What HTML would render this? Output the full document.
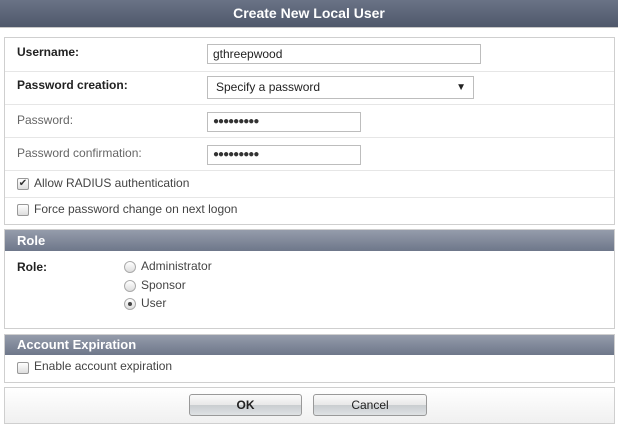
<html><head><style>
body{margin:0;width:618px;height:427px;background:#fff;font-family:"Liberation Sans",Arial,sans-serif;font-size:12px;color:#333;position:relative;overflow:hidden}
.a{position:absolute}
.title{left:0;top:0;width:618px;height:27px;background:linear-gradient(#6a7386,#4f586b);color:#fff;font-weight:bold;font-size:14px;text-align:center;line-height:27px;border-bottom:1px solid #c8c8c8}
.box{border:1px solid #cfcfcf;left:4px;width:609px}
.sep{left:5px;width:609px;height:1px;background:#e6e6e6}
.lbl{left:17px;font-weight:bold;color:#222}
.gl{left:17px;color:#666}
.inp{border:1px solid #bdbdbd;background:#fff;height:18px;line-height:18px;padding-left:5px;box-sizing:border-box}
.hdr{left:5px;width:609px;height:21px;background:linear-gradient(#959cab,#6e778a);color:#fff;font-weight:bold;font-size:13px;line-height:21px;padding-left:12px;box-sizing:border-box}
.cb{width:10px;height:10px;border:1px solid #999;border-radius:2px;background:linear-gradient(#fff,#ddd)}
.rd{width:10px;height:10px;border:1px solid #aaa;border-radius:50%;background:linear-gradient(#fff,#ddd)}
.btn{height:22px;border:1px solid #999;border-radius:3px;background:linear-gradient(#fafafa 0%,#e8e8e8 50%,#c9cdd0 51%,#dfe2e4 100%);text-align:center;line-height:20px;box-sizing:border-box;color:#222}
</style></head><body>
<div class="a title">Create New Local User</div>
<div class="a box" style="top:37px;height:186px"></div>
<div class="a sep" style="top:71px"></div>
<div class="a sep" style="top:104px"></div>
<div class="a sep" style="top:137px"></div>
<div class="a sep" style="top:170px"></div>
<div class="a sep" style="top:197px"></div>
<div class="a lbl" style="top:45px">Username:</div>
<div class="a inp" style="left:207px;top:44px;width:274px;height:20px;line-height:18px;color:#222">gthreepwood</div>
<div class="a lbl" style="top:78px">Password creation:</div>
<div class="a inp" style="left:207px;top:76px;width:267px;height:23px;line-height:21px;padding-left:8px;color:#222">Specify a password<span style="position:absolute;right:7px;font-size:10px">▼</span></div>
<div class="a gl" style="top:113px">Password:</div>
<div class="a inp" style="left:207px;top:112px;width:154px;height:20px;font-size:10px;letter-spacing:-1px">●●●●●●●●●</div>
<div class="a gl" style="top:146px">Password confirmation:</div>
<div class="a inp" style="left:207px;top:145px;width:154px;height:20px;font-size:10px;letter-spacing:-1px">●●●●●●●●●</div>
<div class="a cb" style="left:17px;top:178px;font-size:10px;line-height:10px;text-align:center;color:#333">✔</div>
<div class="a" style="left:34px;top:176px;color:#444">Allow RADIUS authentication</div>
<div class="a cb" style="left:17px;top:204px"></div>
<div class="a" style="left:34px;top:202px;color:#444">Force password change on next logon</div>

<div class="a box" style="top:229px;height:98px"></div>
<div class="a hdr" style="top:230px">Role</div>
<div class="a lbl" style="top:260px">Role:</div>
<div class="a rd" style="left:124px;top:261px"></div><div class="a" style="left:141px;top:259px;color:#444">Administrator</div>
<div class="a rd" style="left:124px;top:280px"></div><div class="a" style="left:141px;top:278px;color:#444">Sponsor</div>
<div class="a rd" style="left:124px;top:298px"><div class="a" style="left:3px;top:3px;width:4px;height:4px;border-radius:50%;background:#444"></div></div><div class="a" style="left:141px;top:296px;color:#444">User</div>

<div class="a box" style="top:334px;height:47px"></div>
<div class="a hdr" style="top:335px;height:20px;line-height:19px">Account Expiration</div>
<div class="a cb" style="left:17px;top:362px"></div>
<div class="a" style="left:34px;top:359px;color:#444">Enable account expiration</div>

<div class="a box" style="top:387px;height:35px;background:linear-gradient(#fff,#f0f0f0)"></div>
<div class="a btn" style="left:189px;top:394px;width:113px;font-weight:bold">OK</div>
<div class="a btn" style="left:313px;top:394px;width:114px">Cancel</div>
</body></html>
